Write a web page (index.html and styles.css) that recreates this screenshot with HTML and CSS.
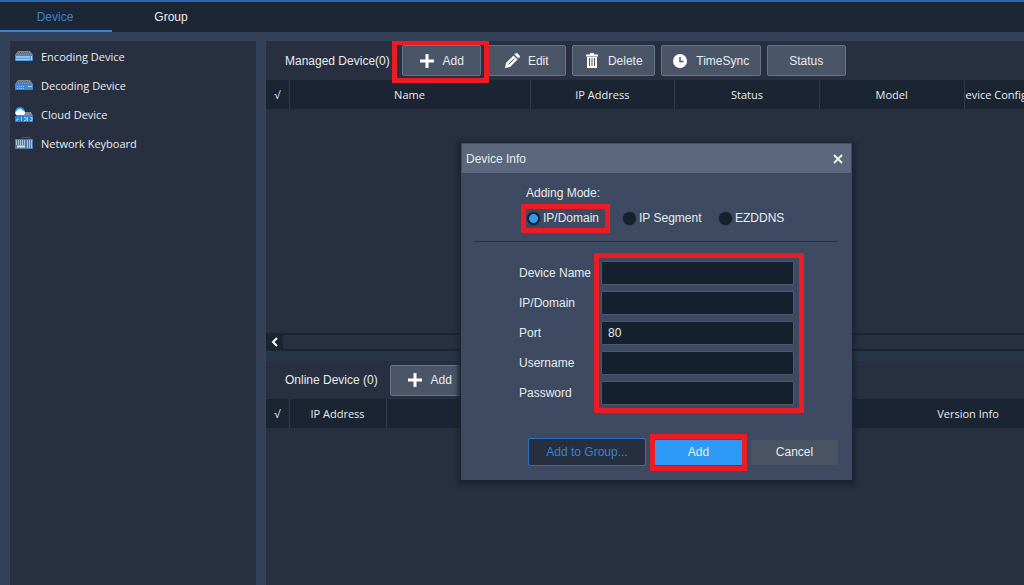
FILE: index.html
```html
<!DOCTYPE html>
<html lang="en">
<head>
    <meta charset="UTF-8">
    <meta name="viewport" content="width=device-width, initial-scale=1.0">
    <title>Device</title>
    <link rel="stylesheet" href="styles.css">
</head>
<body>
    <nav class="tabs">
        <a class="tab active" href="#device">Device</a>
        <a class="tab" href="#group">Group</a>
    </nav>

    <div class="workspace">
        <aside class="sidebar">
            <ul class="device-types">
                <li>
                    <a href="#encoding">
                        <svg class="type-icon" viewBox="0 0 18 16">
                            <path d="M3 2h12l3 4H0z" fill="#7c8796"/>
                            <path d="M3 3.500h12M2 5h14" stroke="#566273" stroke-dasharray="1 1"/>
                            <rect y="6" width="18" height="6" fill="#3f86d0"/>
                            <path d="M1 8h14M1 10.500h14" stroke="#a9d3f5" stroke-width="1.500"/>
                            <path d="M16.500 7v4" stroke="#d5eafb"/>
                        </svg>
                        Encoding Device
                    </a>
                </li>
                <li>
                    <a href="#decoding">
                        <svg class="type-icon" viewBox="0 0 18 16">
                            <path d="M3 2h12l3 4H0z" fill="#7c8796"/>
                            <path d="M3 3.500h12M2 5h14" stroke="#566273" stroke-dasharray="1 1"/>
                            <rect y="6" width="18" height="6" fill="#3a86dc"/>
                            <path d="M2 8.500h8M2 10.500h8" stroke="#b5dcfa" stroke-dasharray="1 1"/>
                            <path d="M13 8.500h4" stroke="#bfe0fa"/>
                        </svg>
                        Decoding Device
                    </a>
                </li>
                <li>
                    <a href="#cloud">
                        <svg class="type-icon" viewBox="0 0 18 16">
                            <path d="M8 5h8l2 4H5z" fill="#7c8796"/>
                            <rect y="9" width="18" height="6" fill="#2f7fd0"/>
                            <path d="M2 14v-2h2M6.500 10v4M9 10.500h2v3H9M12.500 10v4M15 10.500h2v3h-2" fill="none" stroke="#a9d6f8"/>
                            <circle cx="5" cy="5" r="5" fill="#2391ee"/>
                            <path d="M2 8a2 2 0 0 1-.500-3.800 3.500 3.500 0 0 1 6.500-.500A2.200 2.200 0 0 1 8.500 8z" fill="#fff"/>
                        </svg>
                        Cloud Device
                    </a>
                </li>
                <li>
                    <a href="#keyboard">
                        <svg class="type-icon" viewBox="0 0 18 16">
                            <path d="M7 3V1.500h8V3" fill="none" stroke="#465467"/>
                            <rect y="3" width="18" height="10" fill="#4f79a6"/>
                            <path d="M1.500 4v5M3.500 4v5M5.500 4v5M7.500 4v5M9.500 4v5M12.500 4v8M14.500 4v8M16.500 4v8" stroke="#a9c3d8"/>
                            <path d="M2 10.500h8" stroke="#dbe3df" stroke-width="2"/>
                        </svg>
                        Network Keyboard
                    </a>
                </li>
            </ul>
        </aside>

        <main class="content">
            <section class="panel managed">
                <div class="toolbar">
                    <h2>Managed Device(0)</h2>
                    <span class="highlight highlight-toolbar">
                        <button class="tool" type="button">
                            <svg viewBox="0 0 16 16"><path d="M8 1v14M1 8h14" stroke="#fff" stroke-width="3"/></svg>
                            Add
                        </button>
                    </span>
                    <button class="tool" type="button">
                        <svg viewBox="0 0 16 16">
                            <path d="M1 15l1-5 7.500-7.500 4 4L6 14z" fill="#fff"/>
                            <path d="M10.500 1.500l1-1q1-.800 2 0l2 2q.800 1 0 2l-1 1z" fill="#fff"/>
                            <path d="M4.500 11.500l6-6" stroke="#4a5568"/>
                        </svg>
                        Edit
                    </button>
                    <button class="tool delete" type="button">
                        <svg viewBox="0 0 16 16">
                            <path d="M2 2.500h12M6 1h4" stroke="#fff" stroke-width="2"/>
                            <path d="M3 4h10v11H3z" fill="#fff"/>
                            <path d="M5.500 5v8M8 5v8M10.500 5v8" stroke="#4a5568"/>
                        </svg>
                        Delete
                    </button>
                    <button class="tool sync" type="button">
                        <svg viewBox="0 0 16 16">
                            <circle cx="8" cy="8" r="7" fill="#fff"/>
                            <path d="M8 4v4.500h3.500" fill="none" stroke="#4a5568" stroke-width="1.500"/>
                        </svg>
                        TimeSync
                    </button>
                    <button class="tool" type="button">Status</button>
                </div>
                <table class="managed-table">
                    <thead>
                        <tr>
                            <th class="col-check">√</th>
                            <th class="col-name">Name</th>
                            <th>IP Address</th>
                            <th>Status</th>
                            <th>Model</th>
                            <th class="col-config"><span>Device Config</span></th>
                        </tr>
                    </thead>
                </table>
                <div class="scrollbar">
                    <button class="scroll-left" type="button" aria-label="Scroll left">
                        <svg viewBox="0 0 8 10"><path d="M6 1L2 5l4 4" fill="none" stroke="#fff" stroke-width="2"/></svg>
                    </button>
                    <div class="scroll-thumb"></div>
                </div>
            </section>

            <section class="panel online">
                <div class="toolbar">
                    <h2>Online Device (0)</h2>
                    <button class="tool" type="button">
                        <svg viewBox="0 0 16 16"><path d="M8 1v14M1 8h14" stroke="#fff" stroke-width="3"/></svg>
                        Add
                    </button>
                </div>
                <table class="online-table">
                    <thead>
                        <tr>
                            <th class="col-check">√</th>
                            <th class="col-ip">IP Address</th>
                            <td class="col-rest"></td>
                            <th class="col-version">Version Info</th>
                        </tr>
                    </thead>
                </table>
            </section>
        </main>
    </div>

    <form class="dialog" role="dialog" aria-labelledby="dialog-title">
        <header class="dialog-header">
            <h1 id="dialog-title">Device Info</h1>
            <button class="close" type="button" aria-label="Close">
                <svg viewBox="0 0 10 10"><path d="M1 1l8 8M9 1L1 9" stroke="#e6f5f0" stroke-width="2"/></svg>
            </button>
        </header>

        <fieldset class="modes">
            <legend>Adding Mode:</legend>
            <div class="mode-list">
                <label class="highlight highlight-mode"><input type="radio" name="mode" checked>IP/Domain</label>
                <label><input type="radio" name="mode">IP Segment</label>
                <label><input type="radio" name="mode">EZDDNS</label>
            </div>
        </fieldset>

        <div class="fields">
            <div class="field-labels">
                <label for="device-name">Device Name</label>
                <label for="ip-domain">IP/Domain</label>
                <label for="port">Port</label>
                <label for="username">Username</label>
                <label for="password">Password</label>
            </div>
            <div class="field-inputs highlight highlight-fields">
                <input type="text" id="device-name">
                <input type="text" id="ip-domain">
                <input type="text" id="port" value="80">
                <input type="text" id="username">
                <input type="password" id="password">
            </div>
        </div>

        <footer class="actions">
            <button class="to-group" type="button">Add to Group...</button>
            <span class="highlight highlight-add"><button class="primary" type="button">Add</button></span>
            <button class="cancel" type="button">Cancel</button>
        </footer>
    </form>
</body>
</html>
```
FILE: styles.css
```css
* {
    box-sizing: border-box;
}

body {
    margin: 0;
    height: 100vh;
    display: flex;
    flex-direction: column;
    overflow: hidden;
    background-color: #334258;
    color: #e8ecef;
    font-family: "Liberation Sans", Arial, sans-serif;
    font-size: 12px;
    line-height: 16px;
}

h1, h2 {
    margin: 0;
    font-size: 12px;
    font-weight: normal;
}

button, input {
    font: inherit;
    color: inherit;
}

button {
    padding: 0;
    border: none;
    background: none;
}

a {
    color: inherit;
    text-decoration: none;
}

/* Top tabs */
.tabs {
    display: flex;
    height: 32px;
    flex: none;
    background-color: #1c2635;
    border-top: 2px solid #2b63b5;
}

.tab {
    display: flex;
    align-items: center;
    justify-content: center;
    width: 112px;
    padding: 2px 2px 0 0;
    border-bottom: 2px solid transparent;
}

.tab + .tab {
    width: 120px;
}

.tab.active {
    color: #3d82d2;
    border-bottom-color: #3d82d2;
}

.workspace {
    flex: 1;
    display: flex;
    gap: 10px;
    min-height: 0;
    padding: 9px 0 0 10px;
}

/* Sidebar */
.sidebar {
    flex: none;
    width: 246px;
    background-color: #272f40;
}

.device-types {
    list-style: none;
    margin: 0;
    padding: 1px 5px;
    font-family: "Open Sans", "Noto Sans", sans-serif;
    font-size: 11px;
}

.device-types a {
    display: flex;
    align-items: center;
    gap: 8px;
    height: 29px;
}

.type-icon {
    width: 18px;
    height: 16px;
}

/* Panels */
.content {
    flex: 1;
    display: flex;
    flex-direction: column;
    gap: 10px;
    min-width: 0;
    overflow: hidden;
    background-color: #27354b;
}

.panel {
    display: flex;
    flex-direction: column;
    background-color: #272f40;
}

.managed {
    height: 310px;
}

.online {
    flex: 1;
}

.toolbar {
    flex: none;
    display: flex;
    align-items: center;
    gap: 6px;
    height: 39px;
    padding-left: 19px;
}

.online .toolbar {
    height: 38px;
}

.toolbar h2 {
    margin-right: 6px;
}

.tool {
    display: flex;
    align-items: center;
    justify-content: center;
    gap: 8px;
    width: 79px;
    height: 31px;
    border: 1px solid #67738a;
    border-radius: 2px;
    background-color: #4a5568;
}

.tool svg {
    width: 16px;
    height: 16px;
}

.tool.delete {
    width: 83px;
}

.tool.sync {
    width: 100px;
}

table {
    flex: none;
    table-layout: fixed;
    border-collapse: collapse;
    background-color: #1a2432;
    font-family: "Open Sans", "Noto Sans", sans-serif;
    font-size: 11px;
}

.managed-table {
    width: 762px;
}

.online-table {
    width: 818px;
}

th, td {
    height: 29px;
    padding: 0;
    font-weight: normal;
    overflow: hidden;
}

th + th {
    border-left: 1px solid #303c4e;
}

th + td {
    border-left: 1px solid #303c4e;
}

.col-check {
    width: 23px;
}

.col-name {
    width: 241px;
}

.col-config {
    width: 64px;
}

.col-config span {
    display: flex;
    justify-content: center;
    margin-left: -8px;
    white-space: nowrap;
}

.col-ip {
    width: 97px;
}

.col-version {
    width: 232px;
}

.scrollbar {
    display: flex;
    height: 18px;
    margin-top: auto;
    border: 2px solid #1a2432;
    border-width: 2px 0;
}

.scroll-left {
    display: flex;
    align-items: center;
    justify-content: center;
    width: 17px;
    background-color: #1a2432;
}

.scroll-left svg {
    width: 8px;
    height: 10px;
}

.scroll-thumb {
    flex: 1;
    background-color: #272f40;
}

/* Device info dialog */
.dialog {
    position: absolute;
    top: 143px;
    left: 461px;
    width: 391px;
    padding-bottom: 13px;
    border: 1px solid #3e4b61;
    background-color: #3d4a61;
    box-shadow: 0 2px 4px 3px #1a2433;
}

.dialog-header {
    display: flex;
    align-items: center;
    justify-content: space-between;
    height: 29px;
    padding: 0 8px 0 4px;
    background-color: #5a677d;
}

.close {
    display: flex;
}

.close svg {
    width: 10px;
    height: 10px;
}

.modes {
    margin: 0 13px;
    padding: 12px 0 15px 51px;
    border: none;
    border-bottom: 1px solid #27313f;
}

.modes legend {
    float: left;
    padding: 0;
}

.mode-list {
    clear: both;
    display: grid;
    grid-template-columns: 86px 86px auto;
    gap: 10px;
    padding-top: 9px;
}

.mode-list label {
    display: flex;
    align-items: center;
    gap: 2px;
}

.mode-list input {
    appearance: none;
    width: 15px;
    height: 15px;
    margin: 0;
    border: 1px solid #3a4454;
    border-radius: 50%;
    background-color: #162130;
}

.mode-list input:checked {
    background-image: radial-gradient(circle, #2f9bf8 4px, transparent 5px);
}

.fields {
    display: flex;
    padding: 19px 57px 0;
}

.field-labels, .field-inputs {
    display: grid;
    gap: 6px;
}

.field-labels {
    width: 82px;
}

.field-labels label {
    line-height: 24px;
}

.field-inputs {
    flex: 1;
}

.field-inputs input {
    width: 100%;
    height: 24px;
    padding: 0 6px;
    border: 1px solid #4c586a;
    border-radius: 2px;
    background-color: #162130;
}

.actions {
    display: flex;
    align-items: center;
    justify-content: flex-end;
    gap: 9px;
    padding: 33px 13px 0 0;
}

.actions button {
    display: block;
    width: 87px;
    height: 25px;
    border-radius: 1px;
}

.actions .to-group {
    width: 118px;
    height: 28px;
    border: 1px solid #2f70c4;
    border-radius: 2px;
    background-color: #252f40;
    color: #3d82d2;
}

.actions .primary {
    background-color: #2d9af7;
}

.actions .cancel {
    background-color: #4a5364;
}

/* Red marker frames, drawn over the neighbouring controls */
.highlight {
    position: relative;
}

.highlight::after {
    content: "";
    position: absolute;
    border: 5px solid #ed1c24;
    pointer-events: none;
    z-index: 1;
}

.highlight-toolbar::after {
    inset: -5px -8px -7px -10px;
}

.highlight-mode::after {
    inset: -6px 2px -7px -5px;
}

.highlight-fields::after {
    inset: -8px -10px -8px -7px;
}

.highlight-add::after {
    inset: -6px -5px;
}
```
